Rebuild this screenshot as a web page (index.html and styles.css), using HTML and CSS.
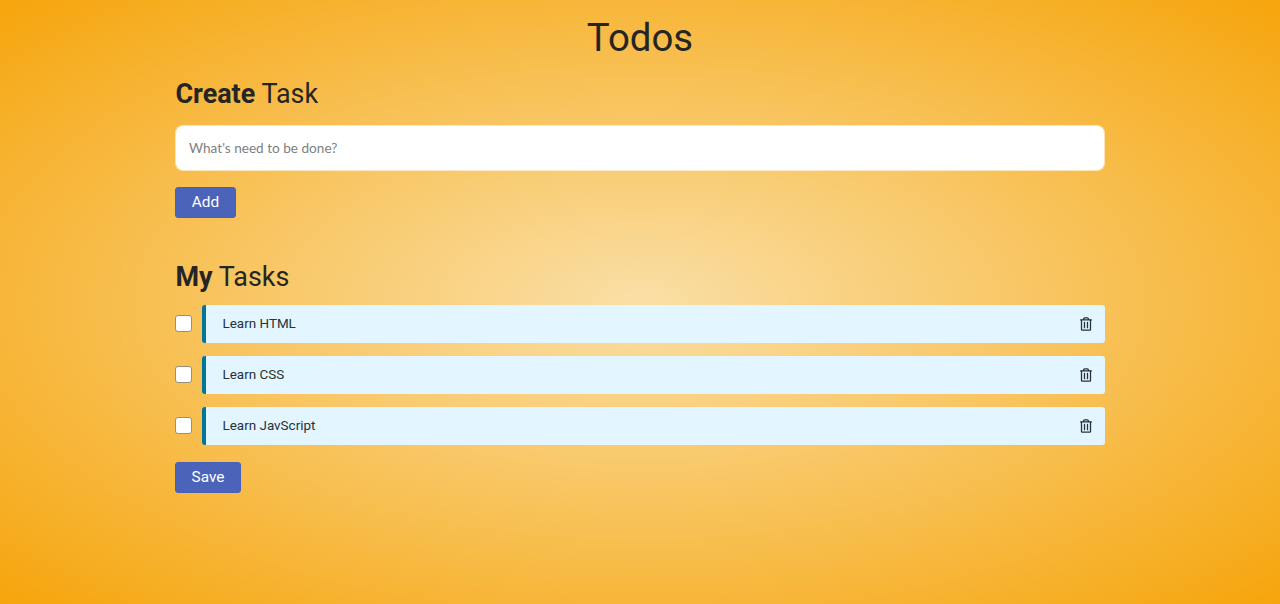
FILE: index.html
```html
<!DOCTYPE html>
<html lang="en">
<head>
<meta charset="utf-8">
<title>Todos</title>
<link rel="stylesheet" href="styles.css">
</head>
<body>
<main class="app">
  <h1 class="title">Todos</h1>
  <section class="create">
    <h2 class="heading"><strong>Create</strong> Task</h2>
    <input class="task-input" type="text" placeholder="What's need to be done?">
    <button class="btn btn-add" type="button">Add</button>
  </section>
  <section class="tasks">
    <h2 class="heading"><strong>My</strong> Tasks</h2>
    <ul class="task-list">
      <li class="task">
        <input class="check" type="checkbox">
        <div class="task-card"><span>Learn HTML</span>
          <svg class="trash" viewBox="0 0 448 512" aria-hidden="true"><path d="M268 416h24a12 12 0 0 0 12-12V188a12 12 0 0 0-12-12h-24a12 12 0 0 0-12 12v216a12 12 0 0 0 12 12zM432 80h-82.400l-34-56.700A48 48 0 0 0 274.400 0H173.600a48 48 0 0 0-41.200 23.300L98.400 80H16A16 16 0 0 0 0 96v16a16 16 0 0 0 16 16h16v336a48 48 0 0 0 48 48h288a48 48 0 0 0 48-48V128h16a16 16 0 0 0 16-16V96a16 16 0 0 0-16-16zM171.800 50.900A6 6 0 0 1 177 48h94a6 6 0 0 1 5.200 2.900L293.600 80H154.400zM368 464H80V128h288zm-212-48h24a12 12 0 0 0 12-12V188a12 12 0 0 0-12-12h-24a12 12 0 0 0-12 12v216a12 12 0 0 0 12 12z"/></svg>
        </div>
      </li>
      <li class="task">
        <input class="check" type="checkbox">
        <div class="task-card"><span>Learn CSS</span>
          <svg class="trash" viewBox="0 0 448 512" aria-hidden="true"><path d="M268 416h24a12 12 0 0 0 12-12V188a12 12 0 0 0-12-12h-24a12 12 0 0 0-12 12v216a12 12 0 0 0 12 12zM432 80h-82.400l-34-56.700A48 48 0 0 0 274.400 0H173.600a48 48 0 0 0-41.200 23.300L98.400 80H16A16 16 0 0 0 0 96v16a16 16 0 0 0 16 16h16v336a48 48 0 0 0 48 48h288a48 48 0 0 0 48-48V128h16a16 16 0 0 0 16-16V96a16 16 0 0 0-16-16zM171.800 50.900A6 6 0 0 1 177 48h94a6 6 0 0 1 5.200 2.900L293.600 80H154.400zM368 464H80V128h288zm-212-48h24a12 12 0 0 0 12-12V188a12 12 0 0 0-12-12h-24a12 12 0 0 0-12 12v216a12 12 0 0 0 12 12z"/></svg>
        </div>
      </li>
      <li class="task">
        <input class="check" type="checkbox">
        <div class="task-card"><span>Learn JavScript</span>
          <svg class="trash" viewBox="0 0 448 512" aria-hidden="true"><path d="M268 416h24a12 12 0 0 0 12-12V188a12 12 0 0 0-12-12h-24a12 12 0 0 0-12 12v216a12 12 0 0 0 12 12zM432 80h-82.400l-34-56.700A48 48 0 0 0 274.400 0H173.600a48 48 0 0 0-41.200 23.300L98.400 80H16A16 16 0 0 0 0 96v16a16 16 0 0 0 16 16h16v336a48 48 0 0 0 48 48h288a48 48 0 0 0 48-48V128h16a16 16 0 0 0 16-16V96a16 16 0 0 0-16-16zM171.800 50.900A6 6 0 0 1 177 48h94a6 6 0 0 1 5.200 2.900L293.600 80H154.400zM368 464H80V128h288zm-212-48h24a12 12 0 0 0 12-12V188a12 12 0 0 0-12-12h-24a12 12 0 0 0-12 12v216a12 12 0 0 0 12 12z"/></svg>
        </div>
      </li>
    </ul>
    <button class="btn btn-save" type="button">Save</button>
  </section>
</main>
</body>
</html>
```
FILE: styles.css
```css
* { box-sizing: border-box; }
html, body { height: 100%; }
body {
  margin: 0;
  height: 604px;
  overflow: hidden;
  font-family: Roboto, sans-serif;
  color: #252525;
  background: radial-gradient(ellipse at 50% 50%, #fadfa6 0%, #f6a50c 100%);
}
.app {
  width: 930px;
  margin: 0 auto;
  padding-top: 15px;
}
.title {
  margin: 0;
  font-size: 38.4px;
  line-height: 45px;
  font-weight: 400;
  text-align: center;
}
.heading {
  margin: 0;
  padding-left: 0.5px;
  font-size: 26.9px;
  line-height: 33px;
  font-weight: 400;
}
.heading strong { font-weight: 700; }
.create { margin-top: 18px; }
.task-input {
  display: block;
  width: 100%;
  height: 46px;
  margin-top: 14px;
  padding: 0 13px;
  border: 1px solid rgba(255, 255, 255, 0.6);
  background-clip: padding-box;
  border-radius: 8px;
  background-color: #fff;
  font-family: Lato, sans-serif;
  font-size: 13.6px;
  outline: none;
}
.task-input::placeholder { color: #808080; }
.btn {
  display: block;
  height: 31px;
  padding: 0 0 1px;
  border: 1px solid #4a60b8;
  border-radius: 3px;
  background: #4c63ba;
  color: #fff;
  font-family: Roboto, sans-serif;
  font-size: 15.4px;
}
.btn-add { width: 61px; margin-top: 16px; }
.btn-save { width: 66px; margin-top: 17px; }
.tasks { margin-top: 43px; }
.task-list {
  list-style: none;
  margin: 11px 0 0;
  padding: 0;
  display: flex;
  flex-direction: column;
  gap: 13px;
}
.task {
  display: flex;
  align-items: center;
  gap: 10px;
}
.check {
  appearance: none;
  width: 17px;
  height: 17px;
  margin: 0 0 2px;
  flex: none;
  background: #fff;
  border: 1px solid #9a8f7c;
  border-radius: 3px;
}
.task-card {
  flex: 1;
  height: 38px;
  display: flex;
  align-items: center;
  justify-content: space-between;
  padding: 0 13px 0 16.500px;
  background: #e3f5fe;
  border-left: 4px solid #01769a;
  border-radius: 3px;
  font-size: 13.44px;
  color: #263238;
}
.task-card span { margin-bottom: 2px; }
.trash { width: 12px; height: 14px; margin-bottom: 1px; fill: #263238; }
```
